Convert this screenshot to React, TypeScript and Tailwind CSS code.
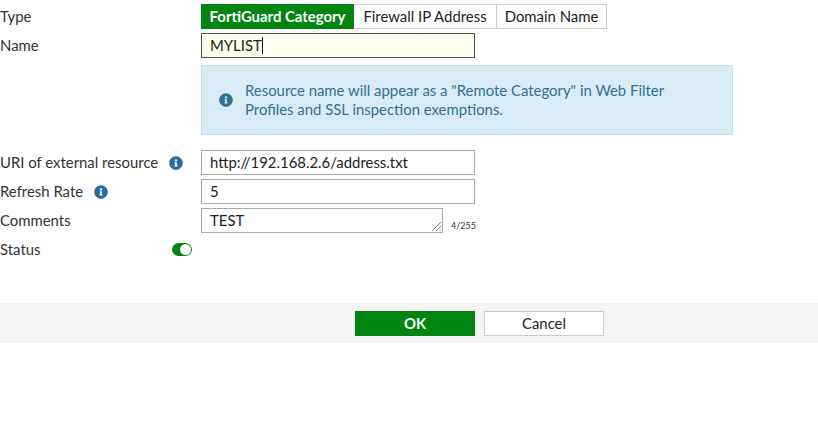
import { FaInfoCircle } from "react-icons/fa";

function Field({ value }: { value: string }) {
  return (
    <div className="w-[274px] h-[25px] border border-[#aaaaaa] bg-white px-2 leading-[23px] text-[#222222]">
      {value}
    </div>
  );
}

function Label({ text, iconGap }: { text: string; iconGap?: string }) {
  return (
    <div className="w-[201px] shrink-0 flex items-center h-[25px] text-[#333333]">
      <span>{text}</span>
      {iconGap && <FaInfoCircle size={14} color="#2a6a9e" className={iconGap} />}
    </div>
  );
}

export default function App() {
  return (
    <div className="w-[818px] h-[429px] bg-white overflow-hidden font-['Lato','Open_Sans',sans-serif] text-[14.9px]">
      <div className="pt-[4px] flex flex-col">
        {/* type */}
        <div className="flex h-[25px]">
          <Label text="Type" />
          <div className="flex h-[25px]">
            <div className="w-[153px] bg-[#008511] text-white font-bold flex items-center justify-center">FortiGuard Category</div>
            <div className="w-[143px] border-y border-r border-[#cccccc] flex items-center justify-center text-[#222222]">Firewall IP Address</div>
            <div className="w-[110px] border-y border-r border-[#cccccc] flex items-center justify-center text-[#222222]">Domain Name</div>
          </div>
        </div>

        {/* name */}
        <div className="flex mt-[4px] h-[25px]">
          <Label text="Name" />
          <div className="w-[274px] h-[25px] border border-[#555555] bg-[#ffffee] px-2 leading-[23px] text-[#222222] flex items-center">
            MYLIST<span className="w-px h-[17px] bg-[#111111]" />
          </div>
        </div>

        {/* info */}
        <div className="flex mt-[7px]">
          <div className="w-[201px] shrink-0" />
          <div className="w-[532px] h-[70px] bg-[#d9ecf5] border border-[#bce4f0] flex items-center text-[#31708f] leading-[19px]">
            <FaInfoCircle size={14} color="#31708f" className="ml-[17px] mr-[12px] shrink-0" />
            <div className="w-[440px]">
              Resource name will appear as a "Remote Category" in Web Filter Profiles and SSL inspection exemptions.
            </div>
          </div>
        </div>

        {/* uri */}
        <div className="flex mt-[15px] h-[25px]">
          <Label text="URI of external resource" iconGap="ml-[11px]" />
          <Field value="http://192.168.2.6/address.txt" />
        </div>

        <div className="flex mt-[4px] h-[25px]">
          <Label text="Refresh Rate" iconGap="ml-[11px]" />
          <Field value="5" />
        </div>

        <div className="flex mt-[4px] h-[25px]">
          <Label text="Comments" />
          <div className="relative w-[242px] h-[25px] border border-[#aaaaaa] bg-white px-2 leading-[23px] text-[#222222]">
            TEST
            <svg className="absolute right-0 bottom-0" width="11" height="11" viewBox="0 0 11 11">
              <path d="M1 10 L10 1 M5 10 L10 5 M8.5 10 L10 8.5" stroke="#888888" strokeWidth="1" fill="none" />
            </svg>
          </div>
          <div className="ml-[8px] self-end text-[9px] leading-[12px] text-[#333333] mb-[1px]">4/255</div>
        </div>

        {/* status */}
        <div className="flex mt-[4px] h-[25px]">
          <div className="w-[172px] shrink-0 h-[24px] flex items-center text-[#333333]">Status</div>
          <div className="w-[20px] h-[13px] mt-[6px] rounded-full bg-[#008511] flex items-center justify-end pr-[1px]">
            <span className="w-[11px] h-[11px] rounded-full bg-white" />
          </div>
        </div>

        {/* footer */}
        <div className="mt-[41px] h-[40px] bg-[#f4f4f4] flex items-center gap-[9px] pl-[355px]">
          <div className="w-[120px] h-[25px] bg-[#008511] text-white font-bold flex items-center justify-center">OK</div>
          <div className="w-[120px] h-[25px] bg-white border border-[#cccccc] text-[#222222] flex items-center justify-center">Cancel</div>
        </div>
      </div>
    </div>
  );
}
